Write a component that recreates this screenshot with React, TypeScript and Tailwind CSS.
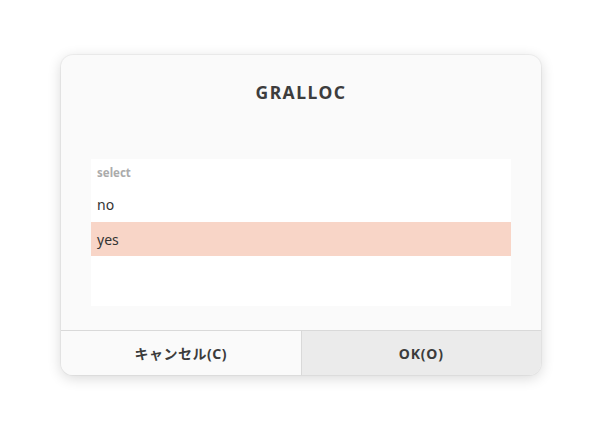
export default function App() {
  const font = { fontFamily: '"Noto Sans", "Noto Sans CJK JP", sans-serif' };
  return (
    <div className="w-[602px] h-[442px] bg-white flex pt-[55px] pl-[61px]" style={font}>
      <div className="w-[480px] h-[320px] rounded-[12px] bg-[#fafafa] shadow-[0_3px_14px_rgba(0,0,0,0.16),0_0_0_1px_rgba(0,0,0,0.04)] flex flex-col overflow-hidden">
        <div className="h-[72px] flex items-center justify-center pt-[2px]">
          <h1 className="text-[17.5px] font-bold text-[#3d3d3d] tracking-[1.5px]">GRALLOC</h1>
        </div>
        <div className="flex-1 px-[30px] pt-[32px]">
          <div className="bg-white h-[147px] flex flex-col">
            <div className="h-[28px] flex items-center px-[6px] text-[11.5px] font-bold text-[#ababab]">select</div>
            <div className="h-[35px] flex items-center px-[6px] text-[14px] text-[#333]">no</div>
            <div className="h-[34px] flex items-center px-[6px] text-[14px] text-[#333] bg-[#f8d5c7]">yes</div>
          </div>
        </div>
        <div className="h-[45px] border-t border-[#d9d9d9] flex">
          <button className="flex-1 flex items-center justify-center text-[14px] font-bold text-[#3c3c3c] bg-[#fafafa] border-r border-[#d9d9d9] tracking-[0.5px]">
            キャンセル(C)
          </button>
          <button className="flex-1 flex items-center justify-center text-[14px] font-bold text-[#3c3c3c] bg-[#ebebeb] tracking-[0.8px]">
            OK(O)
          </button>
        </div>
      </div>
    </div>
  );
}
